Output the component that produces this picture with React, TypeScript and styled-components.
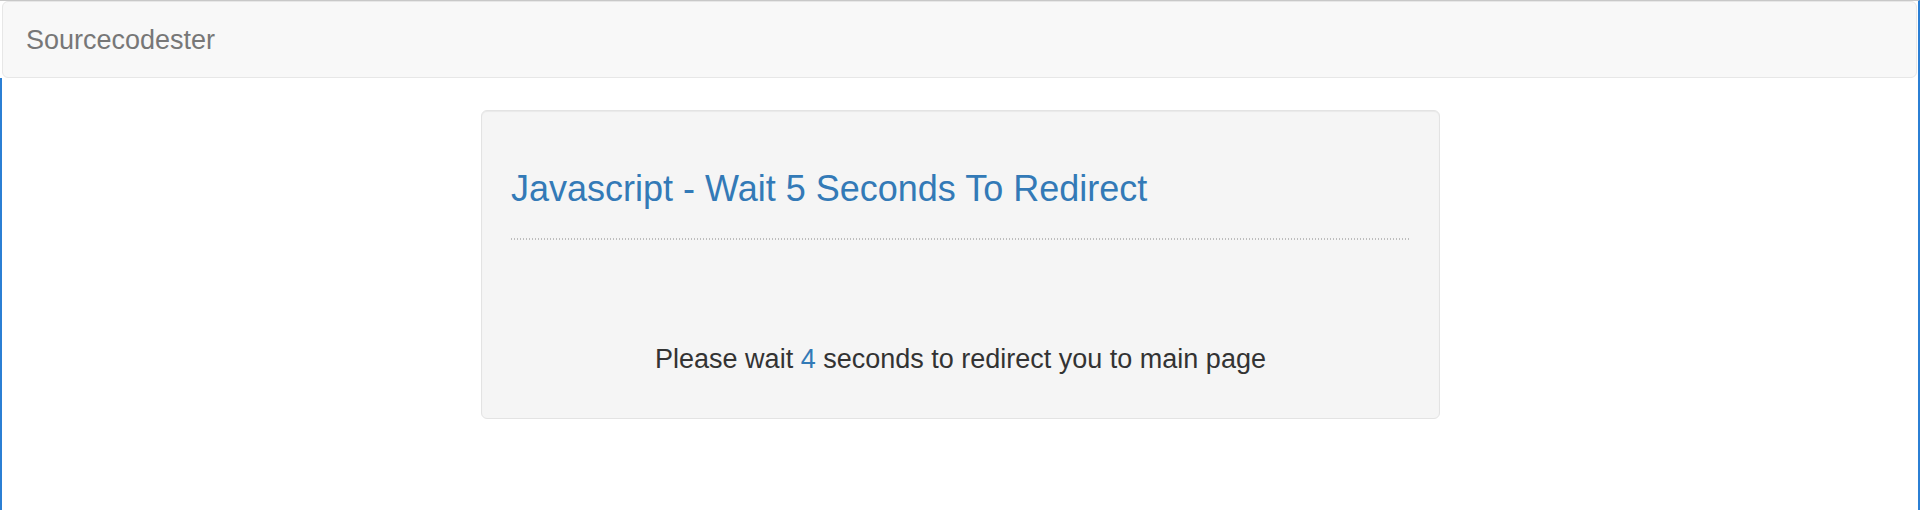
import React from 'react';
import styled, { createGlobalStyle } from 'styled-components';

const GlobalStyle = createGlobalStyle`
  html, body {
    margin: 0;
    padding: 0;
    background: #ffffff;
  }
  body {
    font-family: "Liberation Sans", Arial, Helvetica, sans-serif;
    color: #333333;
  }
`;

// the window frame seen round the screenshot: grey top edge, blue sides
const Frame = styled.div`
  position: relative;
  box-sizing: border-box;
  height: 510px;
  overflow: hidden;
  border-top: 1px solid #c8c8c8;
  border-right: 2px solid #2b7fd4;
  padding: 0 1px 0 2px;

  &::before {
    content: '';
    position: absolute;
    left: 0;
    top: 77px;
    bottom: 0;
    width: 1.5px;
    background: #2b7fd4;
  }
`;

const Navbar = styled.nav`
  display: flex;
  align-items: center;
  height: 75px;
  background: #f8f8f8;
  border: 1px solid #e7e7e7;
  border-radius: 6px;
`;

const Brand = styled.a`
  padding: 0 23px;
  font-size: 27px;
  line-height: 30px;
  color: #777777;
  text-decoration: none;
`;

const Well = styled.div`
  box-sizing: border-box;
  width: 959px;
  margin: 32px 0 0 calc(50% - 478.5px);
  padding: 29px 29px 30px;
  background: #f5f5f5;
  border: 1px solid #e3e3e3;
  border-radius: 6px;
  box-shadow: inset 0 1px 1px rgba(0, 0, 0, 0.05);
`;

const Title = styled.h3`
  margin: 29px 0 29.5px;
  font-size: 36px;
  font-weight: 400;
  line-height: 1.1;
  color: #337ab7;
`;

const Divider = styled.div`
  height: 2px;
  background: repeating-linear-gradient(to right, #bdbdbd 0 1.5px, transparent 1.5px 3px);
`;

const Message = styled.p`
  margin: 99.5px 0 10px;
  font-size: 27px;
  line-height: 38.6px;
  text-align: center;
  color: #333333;
`;

const Count = styled.span`
  color: #337ab7;
`;

export default function App() {
  const seconds = 4;

  return (
    <>
      <GlobalStyle />
      <Frame>
        <Navbar>
          <Brand href="#">Sourcecodester</Brand>
        </Navbar>
        <Well>
          <Title>Javascript - Wait 5 Seconds To Redirect</Title>
          <Divider />
          <Message>
            Please wait <Count>{seconds}</Count> seconds to redirect you to main page
          </Message>
        </Well>
      </Frame>
    </>
  );
}
